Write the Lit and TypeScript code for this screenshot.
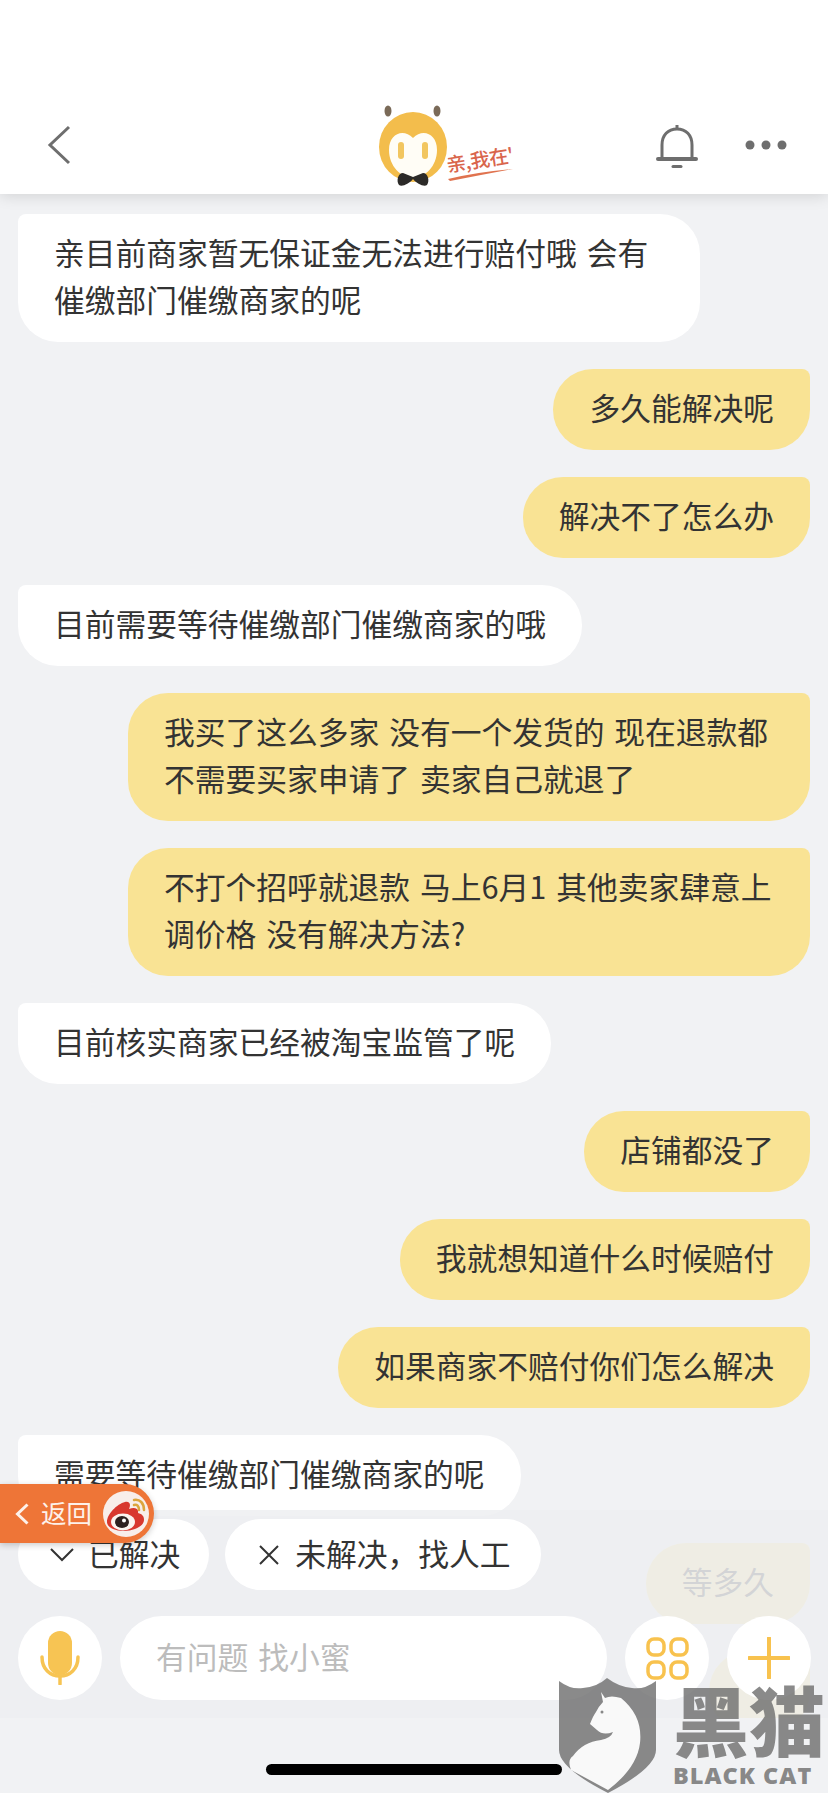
import { LitElement, html, css } from "lit";
import { customElement } from "lit/decorators.js";

type Msg = { me: boolean; text: string };
const MSGS: Msg[] = [
  { me: false, text: "亲目前商家暂无保证金无法进行赔付哦 会有催缴部门催缴商家的呢" },
  { me: true, text: "多久能解决呢" },
  { me: true, text: "解决不了怎么办" },
  { me: false, text: "目前需要等待催缴部门催缴商家的哦" },
  { me: true, text: "我买了这么多家 没有一个发货的 现在退款都不需要买家申请了 卖家自己就退了" },
  { me: true, text: "不打个招呼就退款 马上6月1 其他卖家肆意上调价格 没有解决方法?" },
  { me: false, text: "目前核实商家已经被淘宝监管了呢" },
  { me: true, text: "店铺都没了" },
  { me: true, text: "我就想知道什么时候赔付" },
  { me: true, text: "如果商家不赔付你们怎么解决" },
  { me: false, text: "需要等待催缴部门催缴商家的呢" },
  { me: true, text: "等多久" },
];

const UNSOLVED = "未解决\uFF0C找人工";

@customElement("app-root")
export class AppRoot extends LitElement {
  static styles = css`
    :host {
      display: flex;
      flex-direction: column;
      position: relative;
      width: 828px;
      height: 1793px;
      overflow: hidden;
      background: #f1f2f4;
      color: #333;
      font-family: "Noto Sans CJK SC", "Noto Sans", sans-serif;
      font-size: 30.75px;
      word-spacing: 3px;
    }
    svg { display: block; }
    .header {
      position: relative;
      z-index: 2;
      flex: none;
      height: 194px;
      box-sizing: border-box;
      background: #fff;
      box-shadow: 0 2px 14px rgba(0, 0, 0, 0.13);
      display: grid;
      grid-template-columns: 1fr auto 1fr;
      align-items: start;
      padding: 105px 41px 0 47px;
    }
    .hleft { padding-top: 20px; }
    .logo-wrap { position: relative; width: 136px; height: 86px; margin-left: 56px; }
    .logo-text {
      position: absolute;
      left: 69px;
      top: 42px;
      font-size: 19.5px;
      line-height: 24px;
      font-weight: 500;
      letter-spacing: -0.6px;
      word-spacing: 0;
      color: #d9654c;
      white-space: nowrap;
      transform: rotate(-9deg);
    }
    .logo-line { position: absolute; left: 70px; top: 62px; }
    .hright { justify-self: end; display: flex; align-items: flex-start; gap: 47px; padding-top: 20px; }
    .dots { margin-top: 15px; }

    .chat { flex: 1; position: relative; overflow: hidden; min-height: 0; }
    .list {
      display: flex;
      flex-direction: column;
      align-items: flex-start;
      gap: 27px;
      padding: 20px 18px 0;
    }
    .b {
      max-width: 682px;
      box-sizing: border-box;
      padding: 14px 36px 20px;
      line-height: 47px;
      background: #fff;
      border-radius: 8px 40px 40px 40px;
    }
    .b.me {
      align-self: flex-end;
      background: #f9e394;
      border-radius: 40px 8px 40px 40px;
    }
    .b.stub { width: 101px; height: 81px; }
    .panel {
      position: absolute;
      left: 0;
      right: 0;
      bottom: 0;
      height: 208px;
      box-sizing: border-box;
      padding: 9px 18px 0;
      background: rgba(238, 239, 241, 0.86);
      display: flex;
      flex-direction: column;
      gap: 26px;
    }
    .chips { display: flex; gap: 16px; }
    .chip {
      height: 71px;
      box-sizing: border-box;
      padding: 0 29px 4px 32px;
      display: flex;
      align-items: center;
      gap: 14px;
      background: #fff;
      border-radius: 36px;
      white-space: nowrap;
    }
    .chip.no { gap: 16px; padding: 0 30px 4px 34px; }
    .chip svg { margin-top: 4px; }
    .inputs { display: flex; gap: 18px; align-items: center; }
    .circle {
      flex: none;
      width: 84px;
      height: 84px;
      border-radius: 50%;
      background: #fff;
      display: flex;
      align-items: center;
      justify-content: center;
    }
    .input {
      flex: none;
      width: 487px;
      height: 84px;
      border-radius: 42px;
      background: #fff;
      box-sizing: border-box;
      padding: 0 0 5px 36px;
      display: flex;
      align-items: center;
      color: #bcbcbc;
    }
    .home { flex: none; height: 75px; box-sizing: border-box; padding-top: 46px; display: flex; justify-content: center; }
    .home i { display: block; width: 296px; height: 11px; border-radius: 6px; background: #000; }

    .back {
      position: absolute;
      z-index: 3;
      left: 0;
      top: 1484px;
      width: 154px;
      height: 59px;
      box-sizing: border-box;
      padding: 0 0 4px 15px;
      display: flex;
      align-items: center;
      background: #ee7537;
      border-radius: 0 30px 30px 0;
      box-shadow: 0 2px 6px rgba(0, 0, 0, 0.2);
      color: #fdf1ea;
      font-size: 25.5px;
    }
    .back svg:first-child { margin-top: 4px; }
    .back span { margin-left: 12px; white-space: nowrap; }
    .wb { position: absolute; left: 103px; top: 7px; }

    .mark {
      position: absolute;
      z-index: 4;
      left: 559px;
      top: 1678px;
      display: flex;
      gap: 17px;
      color: rgba(112, 112, 112, 0.82);
    }
    .mark-txt { display: flex; flex-direction: column; align-items: flex-start; }
    .hei {
      font-size: 76px;
      line-height: 76px;
      font-weight: 900;
      margin-top: 2px;
      white-space: nowrap;
    }
    .bc {
      font-family: "Open Sans", sans-serif;
      font-size: 23.5px;
      line-height: 24px;
      font-weight: 800;
      letter-spacing: 1px;
      word-spacing: 0;
      margin-top: 7px;
      white-space: nowrap;
    }
  `;

  render() {
    return html`
      <div class="header">
        <div class="hleft">
          <svg width="24" height="40" viewBox="0 0 24 40"><path d="M22 2 3 20l19 18" fill="none" stroke="#6e6e6e" stroke-width="3"/></svg>
        </div>
        <div class="logo-wrap">
          <svg width="72" height="86" viewBox="0 0 72 86">
            <ellipse cx="11" cy="6" rx="3.500" ry="5.500" fill="#7a6a58"/>
            <ellipse cx="60" cy="6" rx="3.500" ry="5.500" fill="#7a6a58"/>
            <ellipse cx="36" cy="42" rx="34" ry="35" fill="#f3bd4c"/>
            <path d="M36 33C46 23 60 29 60 45c0 16-12 28-24 28S12 61 12 45c0-16 14-22 24-12Z" fill="#fffdf6"/>
            <rect x="21" y="37" width="6" height="17" rx="3" fill="#f2c660"/>
            <rect x="45" y="37" width="6" height="17" rx="3" fill="#f2c660"/>
            <path d="M36 72 26 68c-5 0-7 8-4 12 3 2 10-1 14-6 4 5 11 8 14 6 3-4 1-12-4-12Z" fill="#2c2a28"/>
          </svg>
          <div class="logo-text">亲,我在'</div>
          <svg class="logo-line" width="68" height="14" viewBox="0 0 68 14"><path d="M1 12Q30 5 66 2Q34 8 3 14Z" fill="#e0734f"/></svg>
        </div>
        <div class="hright">
          <svg width="42" height="44" viewBox="0 0 42 44" fill="none" stroke="#6e6e6e" stroke-width="3">
            <path d="M6 33V20C6 10 12 4 21 4s15 6 15 16v13"/>
            <path d="M2 34h38" stroke-width="4" stroke-linecap="round"/>
            <path d="M17 41.500h8" stroke-width="3" stroke-linecap="round"/>
            <path d="M21 0v4" stroke-width="3"/>
          </svg>
          <svg class="dots" width="42" height="10" viewBox="0 0 42 10"><circle cx="5" cy="5" r="4.500" fill="#6e6e6e"/><circle cx="21" cy="5" r="4.500" fill="#6e6e6e"/><circle cx="37" cy="5" r="4.500" fill="#6e6e6e"/></svg>
        </div>
      </div>

      <div class="chat">
        <div class="list">
          ${MSGS.map((m) => html`<div class="b ${m.me ? "me" : ""}">${m.text}</div>`)}
          <div class="b me stub"></div>
        </div>
        <div class="panel">
          <div class="chips">
            <div class="chip">
              <svg width="24" height="14" viewBox="0 0 24 14"><path d="M1 1l11 11L23 1" fill="none" stroke="#333" stroke-width="2"/></svg>
              已解决
            </div>
            <div class="chip no">
              <svg width="20" height="20" viewBox="0 0 20 20"><path d="M1 1l18 18M19 1 1 19" fill="none" stroke="#333" stroke-width="2"/></svg>
              ${UNSOLVED}
            </div>
          </div>
          <div class="inputs">
            <div class="circle">
              <svg width="40" height="54" viewBox="0 0 40 54">
                <rect x="8" y="0" width="24" height="44" rx="12" fill="#f7c453"/>
                <path d="M2 26c0 12 8 19 18 19s18-7 18-19" fill="none" stroke="#f7c453" stroke-width="3.500" stroke-linecap="round"/>
                <path d="M20 45v8" stroke="#f7c453" stroke-width="3.500" stroke-linecap="round"/>
              </svg>
            </div>
            <div class="input">有问题 找小蜜</div>
            <div class="circle">
              <svg width="43" height="43" viewBox="0 0 43 43" fill="none" stroke="#f8c24e" stroke-width="3.500">
                <rect x="2" y="2" width="16" height="16" rx="6"/>
                <rect x="25" y="2" width="16" height="16" rx="6"/>
                <rect x="2" y="25" width="16" height="16" rx="6"/>
                <rect x="25" y="25" width="16" height="16" rx="6"/>
              </svg>
            </div>
            <div class="circle">
              <svg width="42" height="42" viewBox="0 0 42 42"><path d="M21 1v40M1 21h40" fill="none" stroke="#f8c24e" stroke-width="4" stroke-linecap="round"/></svg>
            </div>
          </div>
        </div>
      </div>

      <div class="home"><i></i></div>

      <div class="back">
        <svg width="14" height="22" viewBox="0 0 14 22"><path d="M12.500 1.500 2.500 11l10 9.500" fill="none" stroke="#fdf1ea" stroke-width="3"/></svg>
        <span>返回</span>
        <svg class="wb" width="46" height="46" viewBox="0 0 46 46">
          <circle cx="23" cy="23" r="23" fill="#f8eeea"/>
          <path d="M4 31c0-8 10-18 18-20 5-1 6 3 4 7 5-2 10-1 9 4 4 1 6 3 6 7 0 6-10 11-20 11S4 36 4 31Z" fill="#d8382f"/>
          <ellipse cx="20" cy="31" rx="12" ry="8.500" fill="#fbf4f0"/>
          <ellipse cx="19" cy="31" rx="7" ry="6" fill="#2d2120"/>
          <circle cx="21" cy="29.500" r="2" fill="#fff"/>
          <path d="M31 9c6-1 10 3 10 10M31 14c3-1 5 1 5 5" fill="none" stroke="#dca53e" stroke-width="2.500" stroke-linecap="round"/>
        </svg>
      </div>

      <div class="mark">
        <svg width="97" height="115" viewBox="0 0 97 115">
          <path d="M0 3Q12 12 24 10 38 9 48 0 60 9 73 10 85 12 97 3V72Q97 90 49 115 0 90 0 72Z" fill="rgba(112,112,112,.82)"/>
          <path d="M42 14 46 20Q52 17 62 20 84 38 81 65 78 90 49 112L12 92Q8 82 14 78 24 64 42 62 52 60 54 54 44 58 38 52L31 46Q34 38 37 34 40 28 44 24Z" fill="#f9f9f9"/>
          <circle cx="43" cy="34" r="1.500" fill="#888"/>
        </svg>
        <div class="mark-txt">
          <div class="hei">黑猫</div>
          <div class="bc">BLACK CAT</div>
        </div>
      </div>
    `;
  }
}
